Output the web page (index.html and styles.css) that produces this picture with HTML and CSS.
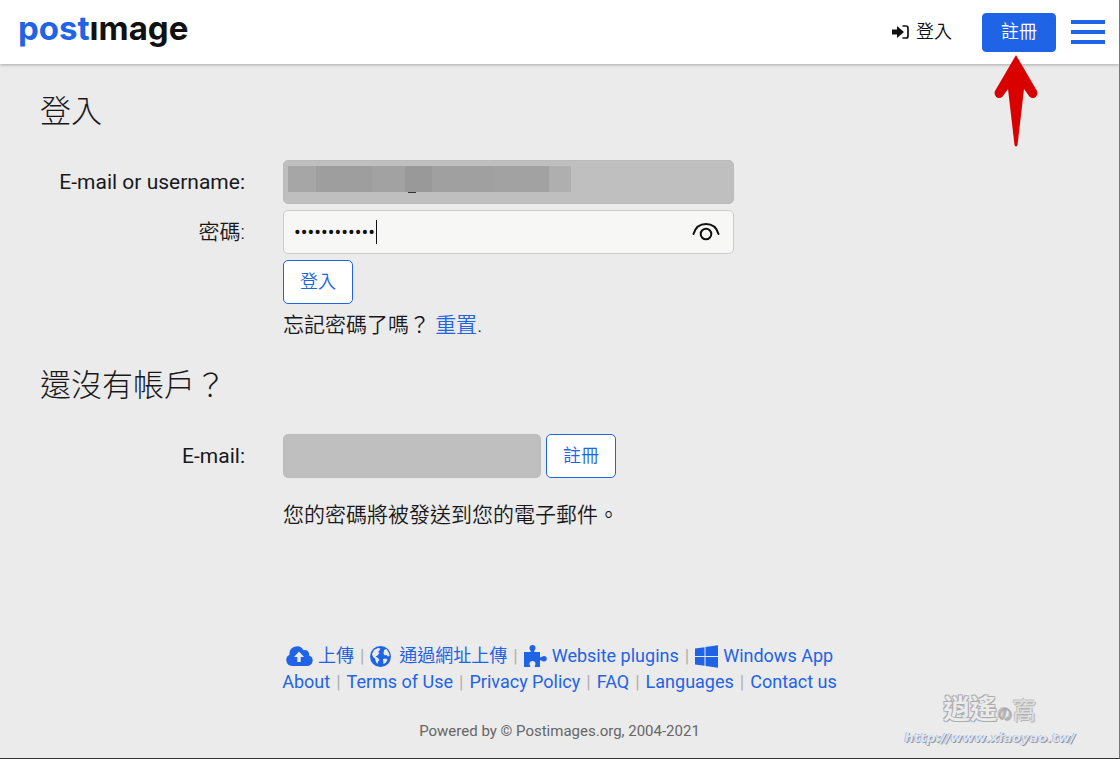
FILE: index.html
```
<!DOCTYPE html>
<html lang="zh-TW">
<head>
  <meta charset="UTF-8">
  <meta name="viewport" content="width=device-width, initial-scale=1">
  <title>登入 - Postimages</title>
  <link rel="stylesheet" href="styles.css">
</head>
<body>

  <header class="topbar">
    <a class="logo" href="#"><span>post</span>ımage</a>
    <nav class="top-nav">
      <a class="nav-login" href="#">
        <svg width="17" height="14" viewBox="0 0 17 14">
          <path d="M0 4.500h5V1l7 6-7 6V9.500H0z" fill="#111"/>
          <path d="M10.500 1H14a2 2 0 0 1 2 2v8a2 2 0 0 1-2 2h-3.500" fill="none" stroke="#111" stroke-width="1.700"/>
        </svg>
        登入
      </a>
      <div class="signup">
        <button class="btn btn-primary" type="button">註冊</button>
        <svg class="arrow" width="46" height="92" viewBox="0 0 46 92">
          <path d="M23 0L44 36C46 41 40 46 36 41L31 34L24.500 90Q23 93 21.500 90L15 34L10 41C6 46 0 41 2 36Z" fill="#d90000"/>
        </svg>
      </div>
      <button class="menu" type="button" aria-label="Menu">
        <span></span><span></span><span></span>
      </button>
    </nav>
  </header>

  <main>
    <h2>登入</h2>
    <form class="form">
      <label for="login">E-mail or username:</label>
      <div class="field">
        <input class="gray" type="text" id="login">
        <div class="mask"></div>
      </div>

      <label for="password">密碼:</label>
      <div class="field">
        <input type="password" id="password" value="abcdefghijkl">
        <span class="caret"></span>
        <button class="eye" type="button" aria-label="Show password">
          <svg width="28" height="20" viewBox="0 0 28 20" fill="none" stroke="#111" stroke-width="2" stroke-linecap="round">
            <path d="M1.500 12C3.500 5 8 2 14 2s10.500 3 12.500 10"/>
            <circle cx="14" cy="12" r="5.300"/>
          </svg>
        </button>
      </div>

      <div class="wide"><button class="btn" type="submit">登入</button></div>
      <p class="wide">忘記密碼了嗎？ <a href="#">重置</a>.</p>
    </form>

    <h2>還沒有帳戶？</h2>
    <form class="form">
      <label for="email">E-mail:</label>
      <div class="inline">
        <input class="gray short" type="email" id="email">
        <button class="btn" type="submit">註冊</button>
      </div>
      <p class="wide note">您的密碼將被發送到您的電子郵件。</p>
    </form>
  </main>

  <footer>
    <div class="links">
      <a href="#">
        <svg width="27" height="20" viewBox="0 0 27 20">
          <path d="M6 20a6 6 0 0 1-2.500-11.300A7.500 7.500 0 0 1 17.500 4.200a4.300 4.300 0 0 1 5.500 5.300A5.400 5.400 0 0 1 21.500 20z" fill="#1f63e6"/>
          <path d="M13 5.500l5 5.500h-3.300v5h-3.400v-5H8z" fill="#ebebeb"/>
        </svg>
        上傳</a>
      <i>|</i>
      <a href="#" class="url">
        <svg width="21" height="21" viewBox="0 0 21 21">
          <circle cx="10.500" cy="10.500" r="10.500" fill="#1f63e6"/>
          <path d="M2 8l2-4 4-2 2.500.5-1 2L8 6l1.500 1-2 2.500-2 1 2.500 1.500 1.500 2-1.500 1.500-.5 2.500L6 16l-1-3.500L3 11zM14 4l2.500-1L19 7l.5 3-1.500.5L16.500 9 15 9.500 13.500 8zM13 13l3-.5 1.500 1.500-2 3-2 1z" fill="#ebebeb"/>
        </svg>
        通過網址上傳</a>
      <i>|</i>
      <a href="#">
        <svg width="23" height="22" viewBox="0 0 23 22">
          <path d="M0 7h6.500c1-1-1-2-1-4a3 3 0 0 1 6 0c0 2-2 3-1 4H16v5c1 1 2-1 4-1a2.500 2.500 0 0 1 0 5.500c-2 0-3-2-4-1V22h-5c-1-1 .5-1.500.5-3a3 3 0 0 0-6 0c0 1.500 1.500 2 .5 3H0z" fill="#1f63e6"/>
        </svg>
        Website plugins</a>
      <i>|</i>
      <a href="#">
        <svg width="23" height="23" viewBox="0 0 23 23">
          <path d="M0 3.500l9.500-1.300V11H0zM10.500 2L23 .200V11H10.500zM0 12h9.500v8.800L0 19.500zM10.500 12H23v10.800L10.500 21z" fill="#1f63e6"/>
        </svg>
        Windows App</a>
    </div>
    <div class="links">
      <a href="#">About</a>
      <i>|</i>
      <a href="#">Terms of Use</a>
      <i>|</i>
      <a href="#">Privacy Policy</a>
      <i>|</i>
      <a href="#">FAQ</a>
      <i>|</i>
      <a href="#">Languages</a>
      <i>|</i>
      <a href="#">Contact us</a>
    </div>
    <p>Powered by © Postimages.org, 2004-2021</p>
  </footer>

  <div class="watermark">
    <div class="wm-name"><b>逍遙</b><small>の</small>窩</div>
    <div class="wm-url">http://www.xiaoyao.tw/</div>
  </div>

</body>
</html>
```
FILE: styles.css
```
* {
  box-sizing: border-box;
}

body {
  position: relative;
  margin: 0;
  min-height: 100vh;
  background: #ebebeb;
  border-right: 1px solid #777;
  border-bottom: 1px solid #333;
  color: #18181b;
  font-family: Roboto, "Noto Sans CJK TC", sans-serif;
  font-size: 21px;
  line-height: 30px;
}

a {
  color: #1f63e6;
  text-decoration: none;
}

h2, p {
  margin: 0;
}

/* top bar */
.topbar {
  display: flex;
  justify-content: space-between;
  align-items: center;
  height: 64px;
  padding: 0 14px 0 18px;
  background: #fff;
  box-shadow: 0 1px 3px #aaa;
}

.logo {
  padding-bottom: 9px;
  color: #111;
  font-family: Inter, sans-serif;
  font-size: 33px;
  font-weight: 700;
  line-height: 40px;
}

.logo span {
  color: #1f63e6;
}

.top-nav {
  display: flex;
  align-items: center;
}

.nav-login {
  display: flex;
  align-items: center;
  gap: 7px;
  margin-right: 30px;
  color: #111;
  font-size: 18px;
  font-weight: 350;
}

.signup {
  position: relative;
  margin-right: 15px;
}

.arrow {
  position: absolute;
  top: 42px;
  left: 11px;
}

.btn {
  height: 44px;
  padding: 0 16px 4px;
  background: #fff;
  border: 1px solid #1f63e6;
  border-radius: 5px;
  color: #1f63e6;
  font-family: inherit;
  font-size: 18px;
  font-weight: 350;
  cursor: pointer;
}

.btn-primary {
  display: block;
  height: 39px;
  padding: 0 18px 4px;
  background: #1f63e6;
  border-radius: 4px;
  color: #fff;
}

.menu {
  display: flex;
  flex-direction: column;
  gap: 6px;
  width: 34px;
  padding: 0;
  background: none;
  border: 0;
  cursor: pointer;
}

.menu span {
  height: 4px;
  background: #1f63e6;
}

/* forms */
main {
  padding: 28px 40px 0;
}

h2 {
  font-size: 31px;
  font-weight: 300;
  line-height: 40px;
}

.form {
  display: grid;
  grid-template-columns: 205px minmax(0, 451px);
  column-gap: 38px;
  row-gap: 6px;
  align-items: center;
  padding: 28px 0 26px;
  font-weight: 350;
}

.form label {
  text-align: right;
  font-weight: 400;
}

.form label[for="password"] {
  font-weight: 350;
}

.wide {
  grid-column: 2;
}

.wide .btn {
  display: block;
}

.note {
  margin-top: 16px;
}

.field {
  position: relative;
}

.inline {
  display: flex;
  gap: 5px;
}

input {
  display: block;
  width: 100%;
  height: 44px;
  padding: 0 10px;
  background: #f7f7f5;
  border: 1px solid #ccccd0;
  border-radius: 5px;
  color: #111;
  font-family: Roboto, sans-serif;
  font-size: 20px;
}

input.gray {
  background: #bfbfbf;
  border-color: #bbb;
}

input.short {
  width: 258px;
}

.mask {
  position: absolute;
  top: 6px;
  left: 5px;
  width: 283px;
  height: 26px;
  background: linear-gradient(to right, #a6a6a6 28px, #9e9e9e 28px 84px, #a2a2a2 84px 117px, #999 117px 144px, #a0a0a0 144px 205px, #a2a2a2 205px 261px, #afafaf 261px);
}

/* bottom of a letter below the mask */
.mask::after {
  content: "";
  position: absolute;
  top: 26px;
  left: 120px;
  width: 8px;
  height: 1px;
  background: #333;
}

.caret {
  position: absolute;
  top: 10px;
  left: 93px;
  width: 1px;
  height: 24px;
  background: #111;
}

.eye {
  position: absolute;
  top: 12px;
  right: 14px;
  padding: 0;
  background: none;
  border: 0;
  cursor: pointer;
}

.eye svg {
  display: block;
}

/* footer */
footer {
  padding: 87px 0 12px;
  text-align: center;
  font-size: 18px;
  line-height: 26px;
}

.links {
  display: flex;
  flex-wrap: wrap;
  justify-content: center;
  gap: 0 6px;
}

.links a {
  display: flex;
  align-items: center;
  gap: 5px;
}

.links .url {
  gap: 8px;
}

.links i {
  color: #b0b0b0;
  font-style: normal;
}

footer p {
  margin-top: 23px;
  color: #666;
  font-size: 15px;
}

/* watermark */
.watermark {
  position: absolute;
  right: 44px;
  bottom: 12px;
  color: #ddd;
  text-align: center;
}

.wm-name {
  font-size: 24px;
  line-height: 32px;
  text-shadow: 1px 1px #b5b5b5, -1px -1px #c4c4c4;
}

.wm-name b {
  color: #ebebeb;
  font-size: 27px;
  text-shadow: 1px 1px #aaa, -1px -1px #aaa, 1px -1px #b5b5b5, -1px 1px #a9bfe6;
}

.wm-name small {
  color: #aaa;
  font-size: 15px;
}

.wm-url {
  color: #dfe5f2;
  font-family: "DejaVu Sans", sans-serif;
  font-size: 13px;
  font-style: italic;
  font-weight: bold;
  line-height: 16px;
  text-shadow: 1px 1px #999, -1px 0 #a9bfe6;
}
```
